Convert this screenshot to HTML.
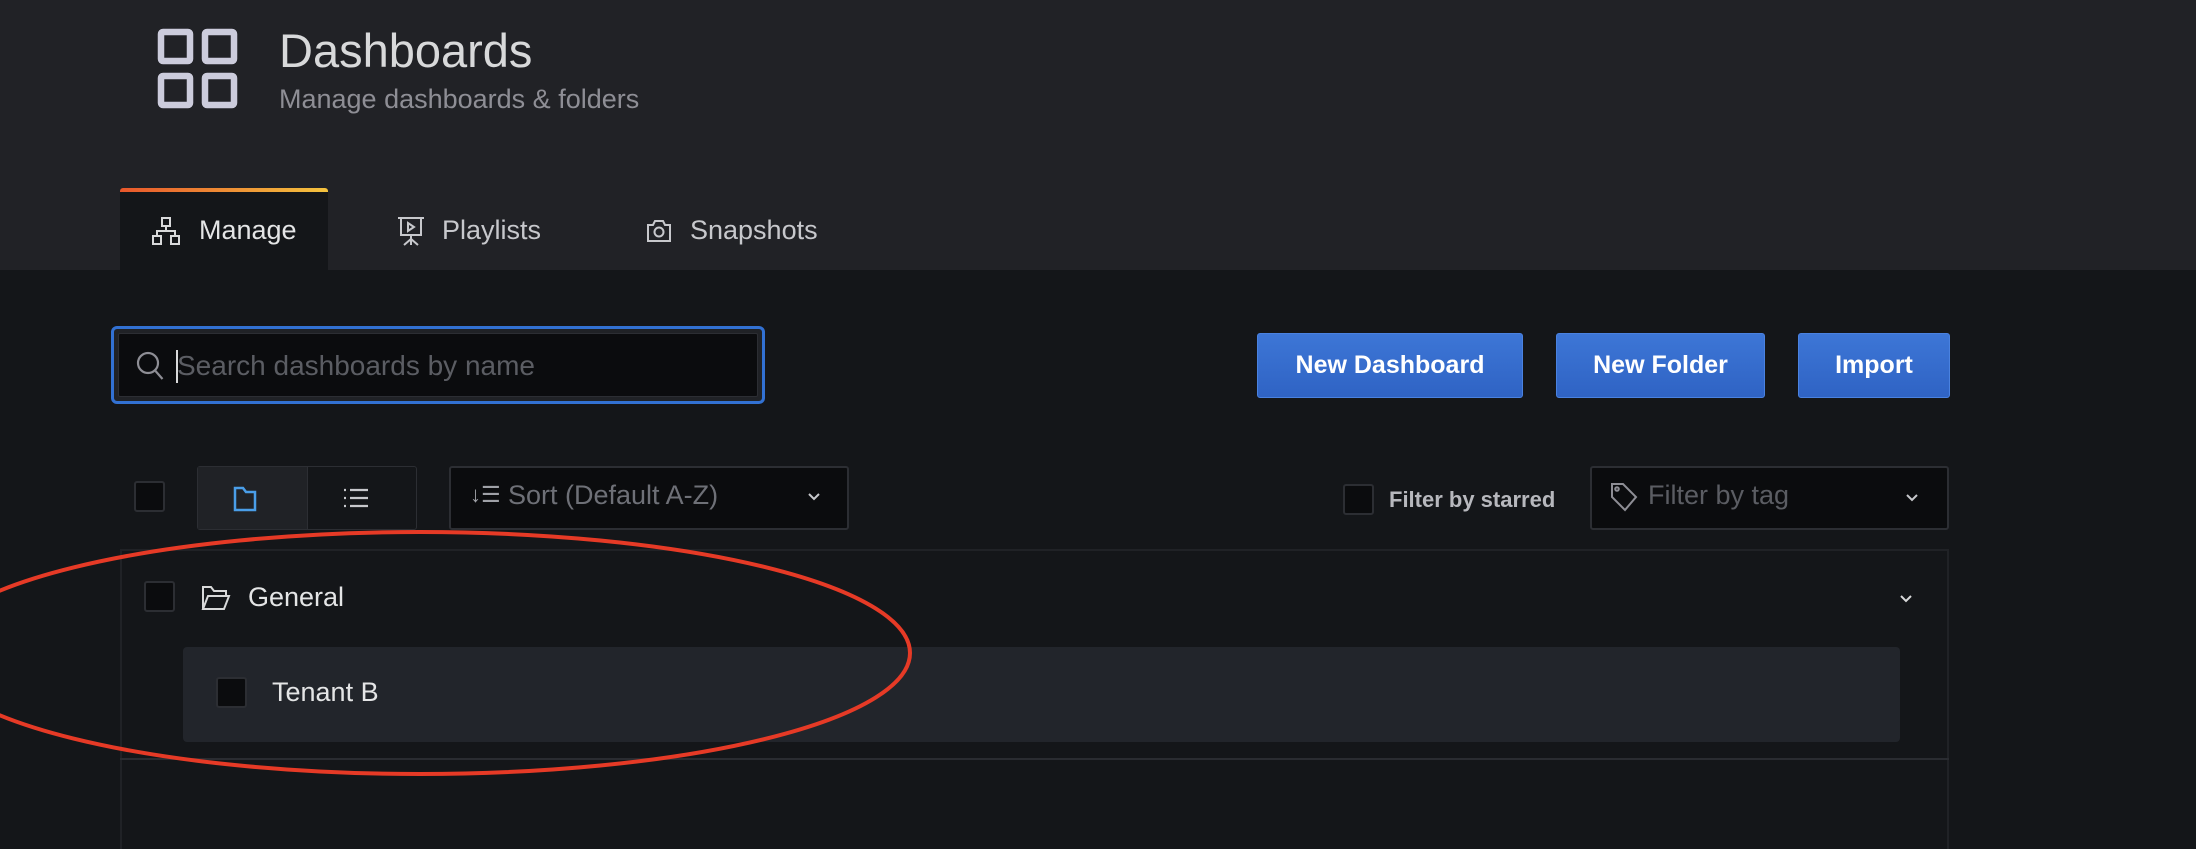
<!DOCTYPE html>
<html><head><meta charset="utf-8"><style>
*{box-sizing:border-box;margin:0;padding:0}
body{width:2196px;height:830px;overflow:hidden;background:#141619;font-family:"Liberation Sans",sans-serif;position:relative;color:#d8d9da}
.abs{position:absolute}
.hdr{left:0;top:0;width:2196px;height:270px;background:#212226}
.cb{position:absolute;width:31px;height:31px;border:2px solid #2c2e33;border-radius:3px;background:#0b0c0e}
.btn{position:absolute;top:333px;height:65px;background:linear-gradient(#3d76d6,#2f63c4);border:1px solid #4a82e0;border-radius:3px;color:#fff;font-weight:bold;font-size:25px;display:flex;align-items:center;justify-content:center}
.t{position:absolute;white-space:nowrap}
</style></head><body>
<div class="abs hdr"></div>
<svg class="abs" style="left:157px;top:28px" width="81" height="81" viewBox="0 0 81 81" fill="none" stroke="#ccccdc" stroke-width="6.5"><rect x="4" y="4" width="29" height="29" rx="2"/><rect x="48" y="4" width="29" height="29" rx="2"/><rect x="4" y="48" width="29" height="29" rx="2"/><rect x="48" y="48" width="29" height="29" rx="2"/></svg>
<div class="t" style="left:279px;top:23px;font-size:47px;color:#d8d9da">Dashboards</div>
<div class="t" style="left:279px;top:84px;font-size:27px;color:#8e8e95">Manage dashboards &amp; folders</div>
<div class="abs" style="left:120px;top:188px;width:208px;height:82px;background:#141619;border-radius:3px 3px 0 0;overflow:hidden"><div style="height:4px;background:linear-gradient(90deg,#e8572b,#f4c33e)"></div></div>
<svg class="abs" style="left:151px;top:216px" width="30" height="30" viewBox="0 0 30 30" fill="none" stroke="#d8d9da" stroke-width="2"><rect x="11" y="2" width="8" height="8"/><rect x="2" y="20" width="8" height="8"/><rect x="20" y="20" width="8" height="8"/><path d="M15 10v5M6 20v-5h18v5"/></svg>
<div class="t" style="left:199px;top:215px;font-size:27px;color:#e4e5e6">Manage</div>
<svg class="abs" style="left:396px;top:215px" width="30" height="32" viewBox="0 0 30 32" fill="none" stroke="#c7c8cc" stroke-width="2"><path d="M2 3h26M5 3v17h20V3M15 20v4M8 30l7-6 7 6M15 24v6"/><path d="M12 8l6 4-6 4z"/></svg>
<div class="t" style="left:442px;top:215px;font-size:27px;color:#c7c8cc">Playlists</div>
<svg class="abs" style="left:645px;top:218px" width="28" height="26" viewBox="0 0 28 26" fill="none" stroke="#c7c8cc" stroke-width="2"><path d="M3 7h5l2-4h8l2 4h5v16H3z"/><circle cx="14" cy="14" r="4.5"/></svg>
<div class="t" style="left:690px;top:215px;font-size:27px;color:#c7c8cc">Snapshots</div>

<div class="abs" style="left:111px;top:326px;width:654px;height:78px;border:3px solid #3271d3;border-radius:6px;background:#202226;padding:4px"><div style="width:100%;height:100%;background:#0b0c0e;border:1px solid #2c2e33;border-radius:2px"></div></div>
<svg class="abs" style="left:135px;top:350px" width="30" height="32" viewBox="0 0 30 32" fill="none" stroke="#8e8e95" stroke-width="2.2"><circle cx="13" cy="13" r="10"/><path d="M20.5 21l7 8"/></svg>
<div class="abs" style="left:176px;top:350px;width:2px;height:33px;background:#d8d9da"></div>
<div class="t" style="left:177px;top:350px;font-size:28px;color:#5b5d63">Search dashboards by name</div>

<div class="btn" style="left:1257px;width:266px">New Dashboard</div>
<div class="btn" style="left:1556px;width:209px">New Folder</div>
<div class="btn" style="left:1798px;width:152px">Import</div>

<div class="cb" style="left:134px;top:481px"></div>
<div class="abs" style="left:197px;top:466px;width:220px;height:64px;border:1px solid #2c2e33;border-radius:3px;background:#141619;display:flex"><div style="width:110px;background:#202226;border-right:1px solid #2c2e33"></div></div>
<svg class="abs" style="left:233px;top:485px" width="24" height="27" viewBox="0 0 24 27" fill="none" stroke="#4a9ee8" stroke-width="2.5"><path d="M2 3h8l3 4h9v18H2z"/></svg>
<svg class="abs" style="left:343px;top:488px" width="26" height="20" viewBox="0 0 26 20" fill="none" stroke="#c7c8cc" stroke-width="2.2"><path d="M1 2h2M7 2h18M1 10h2M7 10h18M1 18h2M7 18h18"/></svg>
<div class="abs" style="left:449px;top:466px;width:400px;height:64px;border:2px solid #2c2e33;border-radius:3px;background:#0b0c0e"></div>
<div class="t" style="left:470px;top:482px;font-size:22px;color:#9fa1a7">↓☰</div>
<div class="t" style="left:508px;top:480px;font-size:27px;color:#6e7077">Sort (Default A-Z)</div>
<svg class="abs" style="left:807px;top:492px" width="14" height="10" viewBox="0 0 14 10" fill="none" stroke="#c7c8cc" stroke-width="2"><path d="M2 2l5 5 5-5"/></svg>

<div class="cb" style="left:1343px;top:484px"></div>
<div class="t" style="left:1389px;top:487px;font-size:22px;font-weight:bold;color:#b7b8bd">Filter by starred</div>
<div class="abs" style="left:1590px;top:466px;width:359px;height:64px;border:2px solid #2c2e33;border-radius:3px;background:#0b0c0e"></div>
<svg class="abs" style="left:1610px;top:482px" width="28" height="30" viewBox="0 0 28 30" fill="none" stroke="#8e8e95" stroke-width="2"><path d="M2 2h11l13 13-11 13L2 15z"/><circle cx="7" cy="7" r="1.8"/></svg>
<div class="t" style="left:1648px;top:480px;font-size:27px;color:#5b5d63">Filter by tag</div>
<svg class="abs" style="left:1905px;top:493px" width="14" height="10" viewBox="0 0 14 10" fill="none" stroke="#c7c8cc" stroke-width="2"><path d="M2 2l5 5 5-5"/></svg>

<div class="abs" style="left:120px;top:549px;width:1829px;height:300px;border-top:2px solid #202226;border-left:2px solid #202226;border-right:2px solid #202226"></div>
<div class="cb" style="left:144px;top:581px"></div>
<svg class="abs" style="left:201px;top:585px" width="30" height="26" viewBox="0 0 30 26" fill="none" stroke="#d8d9da" stroke-width="2"><path d="M2 24V2h8l3 4h12v5M2 24l5-13h21l-5 13z"/></svg>
<div class="t" style="left:248px;top:582px;font-size:27px;color:#e4e5e6">General</div>
<svg class="abs" style="left:1899px;top:594px" width="14" height="10" viewBox="0 0 14 10" fill="none" stroke="#d8d9da" stroke-width="2"><path d="M2 2l5 5 5-5"/></svg>
<div class="abs" style="left:183px;top:647px;width:1717px;height:95px;background:#22252b;border-radius:4px"></div>
<div class="cb" style="left:216px;top:677px"></div>
<div class="t" style="left:272px;top:677px;font-size:27px;color:#e4e5e6">Tenant B</div>
<div class="abs" style="left:120px;top:758px;width:1829px;height:2px;background:#2a2c31"></div>

<svg class="abs" style="left:0;top:0" width="2196" height="830"><ellipse cx="420" cy="653" rx="490" ry="121" fill="none" stroke="#e63a26" stroke-width="4"/></svg>
</body></html>
